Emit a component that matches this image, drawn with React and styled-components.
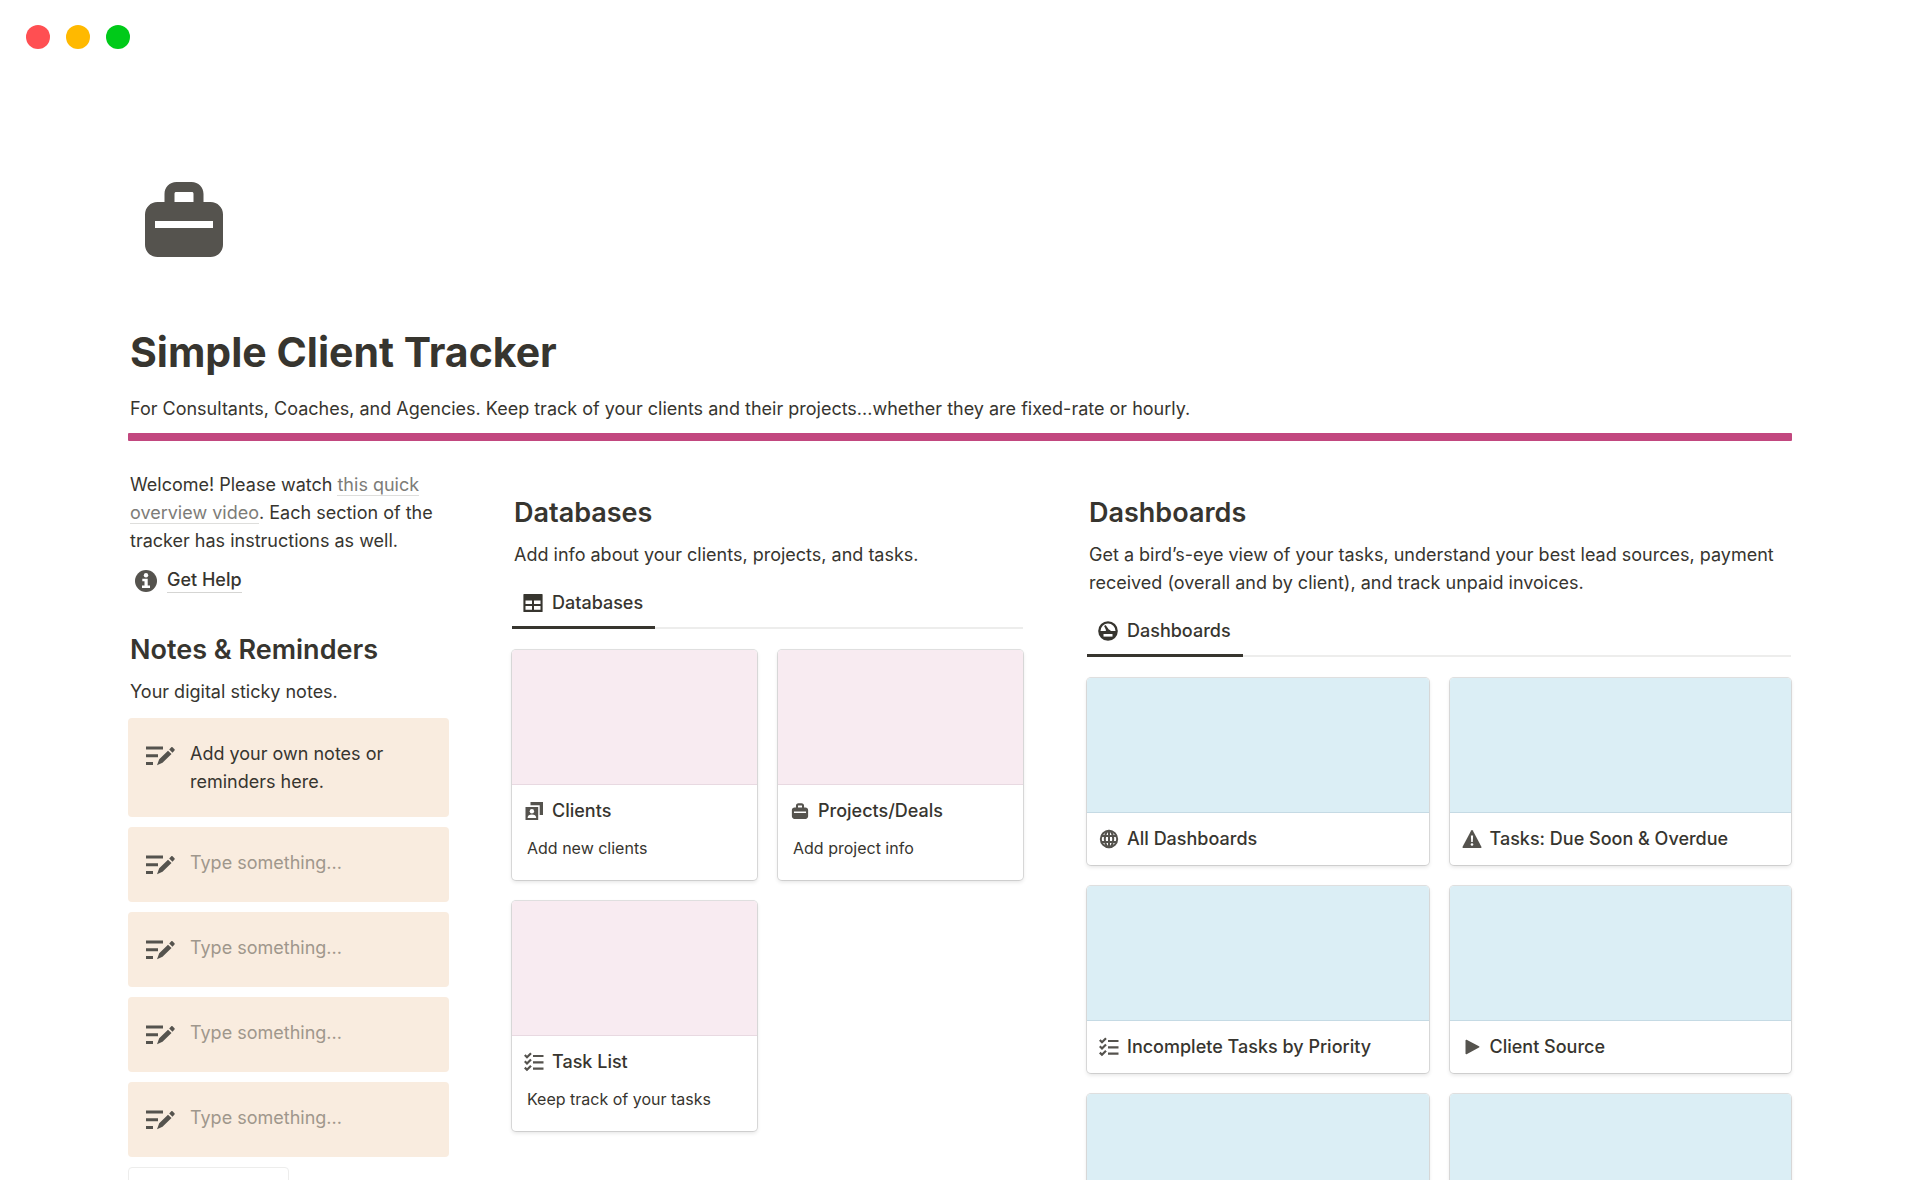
import React from "react";
import styled, { createGlobalStyle } from "styled-components";

const GlobalStyle = createGlobalStyle`
    * {
        box-sizing: border-box;
    }
    body {
        margin: 0;
        background: #fff;
        color: #37352f;
        font-family: Inter, "Liberation Sans", sans-serif;
        font-size: 18px;
        line-height: 28px;
    }
    h1, h2, h3, p {
        margin: 0;
    }
    a {
        color: inherit;
        text-decoration: none;
    }
    svg {
        display: block;
        flex: none;
    }
`;

const BriefcaseIcon = ({ size }) => (
    <svg width={size} height={size} viewBox="0 0 96 96" fill="#55534e" aria-hidden="true">
        <path
            fillRule="evenodd"
            d="M28.500 31V23c0-7 5-12 12-12h15c7 0 12 5 12 12v8h7c7 0 12.500 5.500 12.500 12.500v30c0 7-5.500 12.500-12.500 12.500h-53C14.500 86 9 80.500 9 73.500v-30C9 36.500 14.500 31 21.500 31zM38.500 31h19v-8c0-1.500-.5-2-2-2h-15c-1.500 0-2 .5-2 2z"
        />
        <path d="M19 50h58v7H19z" fill="#fff" />
    </svg>
);

const InfoIcon = () => (
    <svg width="22" height="22" viewBox="0 0 22 22" aria-hidden="true">
        <circle cx="11" cy="11" r="11" fill="#55534e" />
        <circle cx="11" cy="5.300" r="2.200" fill="#fff" />
        <path d="M7.300 8.800h5.400v6.700h2.300v2.500H7v-2.500h2.500v-4.200H7.300z" fill="#fff" />
    </svg>
);

const NoteIcon = () => (
    <svg width="29" height="20" viewBox="0 0 29 20" fill="#55534e" aria-hidden="true">
        <path d="M0 .5h17v3H0zM0 8.200h12v3H0zM0 16h7v3H0z" />
        <path d="M11 19.200l2.200-6 8.800-8.500 3.500 3.300L16.500 16.700zM23.200 3.500l2.100-2.200c.4-.4.8-.4 1.200 0l2 1.900c.4.400.4.900 0 1.300l-2 2.200z" />
    </svg>
);

const TableIcon = () => (
    <svg width="20" height="20" viewBox="0 0 20 20" aria-hidden="true">
        <path
            fillRule="evenodd"
            fill="#37352f"
            d="M1 1h18c.4 0 .6.2.6.6v16.800c0 .4-.2.6-.6.6H1c-.4 0-.6-.2-.6-.6V1.600C.4 1.200.6 1 1 1zM2.500 7.500v3.500h6.500V7.500zM11 7.500v3.500h6.500V7.500zM2.500 13v3.700h6.500v-3.700zM11 13v3.700h6.500v-3.700z"
        />
    </svg>
);

const GaugeIcon = () => (
    <svg width="20" height="20" viewBox="0 0 20 20" aria-hidden="true">
        <circle cx="10" cy="10" r="9.800" fill="#37352f" />
        <path d="M2.500 10a7.500 7.500 0 0 1 15 0h-4.700a2.800 2.800 0 0 0-2-1.500L7.600 4l-1.500.900 2 4.300-.6.800z" fill="#fff" />
        <path d="M5.500 13h9v2.600h-9z" fill="#fff" />
    </svg>
);

const ClientsIcon = () => (
    <svg width="20" height="20" viewBox="0 0 20 20" aria-hidden="true">
        <path d="M6.500 1H19v13h-3.300V4.300H6.500z" fill="#55534e" />
        <path d="M1.500 6h12.700v13H1.500z" fill="#55534e" />
        <circle cx="7.900" cy="10.300" r="2.200" fill="#fff" />
        <path d="M3.600 17c0-2.500 1.700-3.500 4.300-3.500s4.300 1 4.300 3.500z" fill="#fff" />
    </svg>
);

const ChecklistIcon = () => (
    <svg width="20" height="20" viewBox="0 0 20 20" fill="none" stroke="#55534e" strokeWidth="2.200" aria-hidden="true">
        <path d="M9 4h10.500M9 10.300h10.500M9 16.600h10.500" />
        <path d="M.8 3l2.200 2.200 4-4M.8 9.300l2.200 2.200 4-4M.8 15.600l2.200 2.200 4-4" />
    </svg>
);

const GlobeIcon = () => (
    <svg width="20" height="20" viewBox="0 0 20 20" fill="none" stroke="#55534e" strokeWidth="2" aria-hidden="true">
        <circle cx="10" cy="10" r="8.200" />
        <ellipse cx="10" cy="10" rx="4.200" ry="8.200" />
        <path d="M10 2v16M2.500 7h15M2.500 13h15" />
    </svg>
);

const WarningIcon = () => (
    <svg width="20" height="20" viewBox="0 0 20 20" aria-hidden="true">
        <path d="M10 1c.4 0 .6.200.8.500l8.600 16.200c.3.600 0 1.300-.8 1.300H1.400c-.8 0-1.100-.7-.8-1.300L9.200 1.500c.2-.3.400-.5.800-.5z" fill="#55534e" />
        <path d="M8.900 6.500h2.200l-.3 6.500H9.200z" fill="#fff" />
        <circle cx="10" cy="15.500" r="1.300" fill="#fff" />
    </svg>
);

const PlayIcon = () => (
    <svg width="20" height="20" viewBox="0 0 20 20" aria-hidden="true">
        <path d="M3.500 3.500c0-.7.500-1 1.100-.7l12.400 6.500c.6.300.6 1 0 1.300L4.600 17.200c-.6.300-1.100 0-1.100-.7z" fill="#55534e" />
    </svg>
);

const databases = [
    { title: "Clients", text: "Add new clients", icon: <ClientsIcon /> },
    { title: "Projects/Deals", text: "Add project info", icon: <BriefcaseIcon size={20} /> },
    { title: "Task List", text: "Keep track of your tasks", icon: <ChecklistIcon /> },
];

const dashboards = [
    { title: "All Dashboards", icon: <GlobeIcon /> },
    { title: "Tasks: Due Soon & Overdue", icon: <WarningIcon /> },
    { title: "Incomplete Tasks by Priority", icon: <ChecklistIcon /> },
    { title: "Client Source", icon: <PlayIcon /> },
    { title: "", icon: null },
    { title: "", icon: null },
];

const Gallery = ({ items, color, line }) => (
    <Grid>
        {items.map((item, i) => (
            <Card key={i} href="#">
                <Cover $color={color} $line={line} />
                <CardTitle>
                    {item.icon}
                    {item.title}
                </CardTitle>
                {item.text && <CardText>{item.text}</CardText>}
            </Card>
        ))}
    </Grid>
);

const App = () => {
    return (
        <Window>
            <GlobalStyle />
            <WindowBar>
                <Dot $color="#ff4f52" />
                <Dot $color="#ffb900" />
                <Dot $color="#00ca19" />
            </WindowBar>
            <Page>
                <PageIcon>
                    <BriefcaseIcon size={96} />
                </PageIcon>
                <Title>Simple Client Tracker</Title>
                <Intro>
                    For Consultants, Coaches, and Agencies. Keep track of your clients and their
                    projects...whether they are fixed-rate or hourly.
                </Intro>
                <Divider />
                <Columns>
                    <section>
                        <Text>
                            Welcome! Please watch <TextLink href="#">this quick overview video</TextLink>. Each
                            section of the tracker has instructions as well.
                        </Text>
                        <HelpRow>
                            <InfoIcon />
                            <HelpLink href="#">Get Help</HelpLink>
                        </HelpRow>
                        <Heading>Notes &amp; Reminders</Heading>
                        <Text>Your digital sticky notes.</Text>
                        <Notes>
                            <Note>
                                <NoteIcon />
                                <p>Add your own notes or reminders here.</p>
                            </Note>
                            {[1, 2, 3, 4].map((n) => (
                                <Note key={n}>
                                    <NoteIcon />
                                    <NoteInput type="text" placeholder="Type something..." aria-label={`Note ${n}`} />
                                </Note>
                            ))}
                            <NoteButton type="button" aria-label="New note" />
                        </Notes>
                    </section>
                    <SideSection>
                        <Heading>Databases</Heading>
                        <Text>Add info about your clients, projects, and tasks.</Text>
                        <Tabs>
                            <Tab type="button">
                                <TableIcon />
                                Databases
                            </Tab>
                        </Tabs>
                        <Gallery items={databases} color="#f8ebf1" line="#e8d9e1" />
                    </SideSection>
                    <SideSection>
                        <Heading>Dashboards</Heading>
                        <Text>
                            Get a bird’s-eye view of your tasks, understand your best lead sources, payment
                            received (overall and by client), and track unpaid invoices.
                        </Text>
                        <Tabs>
                            <Tab type="button">
                                <GaugeIcon />
                                Dashboards
                            </Tab>
                        </Tabs>
                        <Gallery items={dashboards} color="#dbeef5" line="#c5dae4" />
                    </SideSection>
                </Columns>
            </Page>
        </Window>
    );
};

const Window = styled.div`
    height: calc(100vh - 20px);
    overflow: hidden;
`;

const WindowBar = styled.div`
    display: flex;
    gap: 16px;
    padding: 25px 26px;
`;

const Dot = styled.span`
    width: 24px;
    height: 24px;
    border-radius: 50%;
    background: ${(props) => props.$color};
`;

const Page = styled.main`
    padding: 97px 128px 0;
`;

const PageIcon = styled.div`
    padding-left: 8px;
`;

const Title = styled.h1`
    margin-top: 57px;
    padding: 0 2px;
    font-size: 41px;
    line-height: 56px;
    font-weight: 700;
`;

const Intro = styled.p`
    margin-top: 15px;
    padding: 0 2px;
`;

const Divider = styled.hr`
    height: 8px;
    margin: 10px 0 0;
    border: none;
    border-radius: 1px;
    background: #c2487f;
`;

const Columns = styled.div`
    display: grid;
    grid-template-columns: minmax(0, 321fr) minmax(0, 512fr) minmax(0, 705fr);
    gap: 63px;
    padding-top: 30px;
`;

const Heading = styled.h2`
    margin-top: 39px;
    margin-bottom: 10px;
    padding: 0 2px;
    font-size: 27px;
    line-height: 36px;
    font-weight: 600;
`;

const SideSection = styled.section`
    padding-right: 1px;
    ${Heading} {
        margin-top: 24px;
    }
`;

const Text = styled.p`
    padding: 0 2px;
`;

const TextLink = styled.a`
    color: #7d7c78;
    border-bottom: 1px solid #dededc;
`;

const HelpRow = styled.div`
    display: flex;
    align-items: center;
    gap: 10px;
    margin-top: 13px;
    padding-left: 7px;
`;

const HelpLink = styled.a`
    line-height: 24px;
    font-weight: 500;
    border-bottom: 1px solid #d5d5d3;
`;

const Notes = styled.div`
    display: flex;
    flex-direction: column;
    align-items: stretch;
    gap: 10px;
    margin-top: 12px;
`;

const Note = styled.div`
    display: flex;
    gap: 15px;
    min-height: 75px;
    padding: 22px 18px 21px;
    border-radius: 4px;
    background: #f9ecdf;
    svg {
        margin-top: 6px;
    }
`;

const NoteInput = styled.input`
    flex: 1;
    min-width: 0;
    height: 28px;
    padding: 0;
    border: none;
    outline: none;
    background: transparent;
    color: inherit;
    font: inherit;
    &::placeholder {
        color: #9f978c;
        opacity: 1;
    }
`;

const NoteButton = styled.button`
    width: 50%;
    height: 40px;
    border: 1px solid #ededec;
    border-radius: 4px;
    background: #fff;
`;

const Tabs = styled.div`
    display: flex;
    margin-top: 20px;
    margin-bottom: 21px;
    box-shadow: inset 0 -2px 0 #ededec;
`;

const Tab = styled.button`
    display: flex;
    align-items: center;
    gap: 9px;
    padding: 0 12px 9px 11px;
    border: none;
    border-bottom: 3px solid #37352f;
    background: transparent;
    color: inherit;
    font: inherit;
    font-weight: 500;
    cursor: pointer;
`;

const Grid = styled.div`
    display: grid;
    grid-template-columns: 1fr 1fr;
    gap: 21px;
`;

const Card = styled.a`
    display: block;
    padding-bottom: 12px;
    border-radius: 4px;
    box-shadow: 0 0 0 1px rgba(15, 15, 15, 0.12), 0 2px 4px rgba(15, 15, 15, 0.12);
    overflow: hidden;
`;

const Cover = styled.div`
    height: 135px;
    border-bottom: 1px solid ${(props) => props.$line};
    background: ${(props) => props.$color};
`;

const CardTitle = styled.h3`
    display: flex;
    align-items: center;
    gap: 8px;
    min-height: 28px;
    margin-top: 12px;
    padding: 0 12px;
    font-size: 18px;
    line-height: 28px;
    font-weight: 500;
`;

const CardText = styled.p`
    margin: 11px 0 8px;
    padding: 0 15px;
    font-size: 16px;
    line-height: 24px;
`;

export default App;
